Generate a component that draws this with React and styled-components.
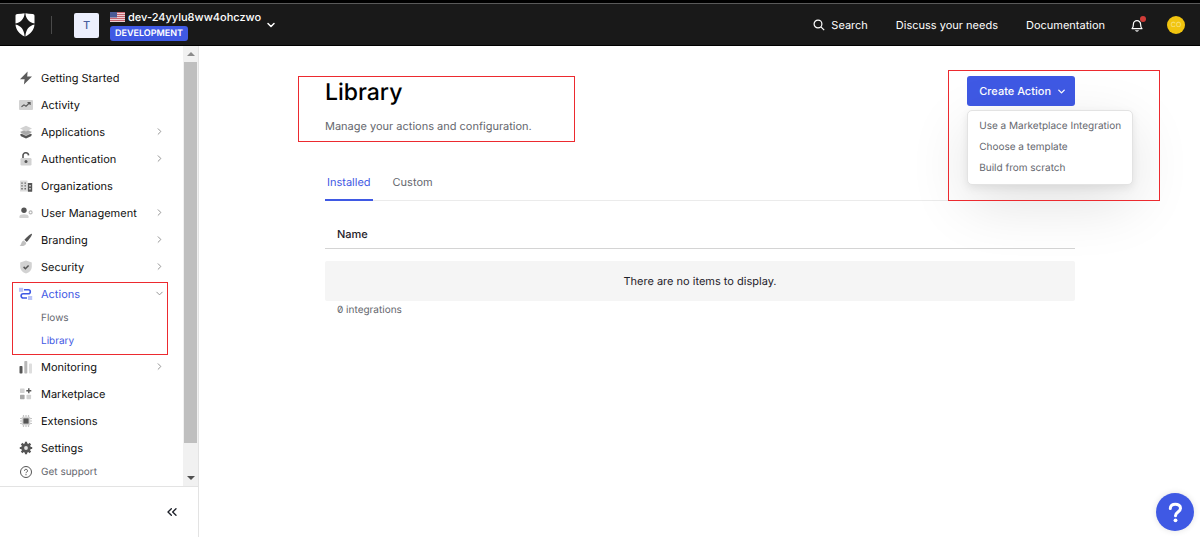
import React, { useState } from "react";
import styled, { createGlobalStyle } from "styled-components";
import { ChevronDown, ChevronRight, ChevronsLeft } from "lucide-react";

const GlobalStyle = createGlobalStyle`
  *,
  *::before,
  *::after {
    box-sizing: border-box;
  }

  body {
    margin: 0;
    background: #ffffff;
    color: #1e212a;
    font-family: Inter, "Liberation Sans", sans-serif;
    font-size: 11px;
    line-height: 16px;
    text-rendering: geometricPrecision;
  }

  button {
    margin: 0;
    padding: 0;
    border: 0;
    background: none;
    color: inherit;
    font: inherit;
    text-rendering: inherit;
    cursor: pointer;
  }

  a {
    color: inherit;
    text-decoration: none;
  }

  svg {
    display: block;
    flex: none;
  }
`;

const DARK = "#555555";
const LIGHT = "#d2d2d2";

// sidebar icons, all on a 14px grid
const icons = {
  bolt: <path d="M8.6 0.4 1 8.2h4.6L4.9 13.6 13 5.6H8.2Z" fill="#5c5c5c" />,
  activity: (
    <>
      <rect x="0" y="2" width="14" height="10" rx="1" fill={LIGHT} />
      <path d="M2.5 8.8 5 6.9l2 1.3 3.6-3.3M8.5 4.6h2.6v2.4" stroke={DARK} strokeWidth="1.1" fill="none" />
    </>
  ),
  layers: (
    <>
      <path d="M1 9.6 7 6.8l6 2.8-1 1.6-5 2.2-5-2.2Z" fill={DARK} />
      <path d="M1 6.8 7 4l6 2.8-1 1.4-5 2.4-5-2.4Z" fill="#a8a8a8" stroke="#fff" strokeWidth="0.5" />
      <path d="M1 3.6 7 0.8l6 2.8-6 3Z" fill={LIGHT} />
    </>
  ),
  lock: (
    <>
      <rect x="1.5" y="6" width="11" height="7.5" rx="1.2" fill={LIGHT} />
      <path d="M4 6V3.8a2.8 2.8 0 0 1 5.6-0.4" stroke={DARK} strokeWidth="1.6" fill="none" />
      <circle cx="7" cy="9.6" r="1.5" fill={DARK} />
    </>
  ),
  buildings: (
    <>
      <rect x="1" y="1.5" width="7.5" height="11" rx="0.6" fill="#dcdcdc" />
      <path d="M3 3.5v7.5M6.2 3.5v7.5" stroke={DARK} strokeWidth="1.3" strokeDasharray="1.3 1.5" />
      <rect x="8.8" y="4" width="4.4" height="8.8" rx="0.6" fill={DARK} />
      <path d="M11 6v1.4M11 9v1.4" stroke="#fff" strokeWidth="1.2" />
    </>
  ),
  users: (
    <>
      <circle cx="5" cy="4.2" r="2.7" fill={DARK} />
      <path d="M0.5 12V10.2c0-1.3 1.8-2 4.5-2s4.5 0.7 4.5 2V12Z" fill={LIGHT} />
      <circle cx="11.6" cy="6.4" r="1.5" stroke="#b4b4b4" strokeWidth="1.1" fill="none" />
    </>
  ),
  brush: (
    <>
      <path d="M12.9 0.8c0.9 0.8-3.7 7-5.1 8.2L5.3 6.8C6.7 5.2 12 0 12.9 0.8Z" fill={DARK} />
      <path d="M4.7 7.4 7.2 9.7c0.3 2.4-3.2 4-6.6 3.2 2-1 1.4-4.8 4.1-5.5Z" fill="#c0c0c0" />
    </>
  ),
  shield: (
    <>
      <path d="M7 0.6 12.8 2.6V7c0 3-2.3 5.2-5.8 6.6C3.5 12.2 1.2 10 1.2 7V2.6Z" fill={LIGHT} />
      <path d="m4.6 6.9 1.8 1.8 3.2-3.3" stroke={DARK} strokeWidth="1.5" fill="none" />
    </>
  ),
  flow: (
    <>
      <rect x="0" y="0.8" width="4.2" height="4" fill="#b9c3f7" />
      <rect x="9" y="9" width="4.2" height="4" fill="#b9c3f7" />
      <path
        d="M5 2.8h4.3a2 2 0 0 1 0 4H4.2a2.1 2.1 0 0 0 0 4.2H8"
        stroke="#3f59e4"
        strokeWidth="1.6"
        fill="none"
      />
    </>
  ),
  bars: (
    <>
      <rect x="0.5" y="6" width="3" height="7.5" rx="0.8" fill={DARK} />
      <rect x="5.3" y="1" width="3" height="12.5" rx="0.8" fill="#b8b8b8" />
      <rect x="10" y="3.5" width="3" height="10" rx="0.8" fill="#dedede" />
    </>
  ),
  market: (
    <>
      <rect x="1" y="1.5" width="4.6" height="4.4" rx="0.6" fill={LIGHT} />
      <rect x="1" y="7.8" width="4.6" height="4.4" rx="0.6" fill="#a8a8a8" />
      <rect x="7.5" y="7.8" width="4.6" height="4.4" rx="0.6" fill={LIGHT} />
      <path d="M9.8 1.2v5M7.3 3.7h5" stroke={DARK} strokeWidth="1.4" />
    </>
  ),
  chip: (
    <>
      <path
        d="M4.5 1v12M7 1v12M9.5 1v12M1 4.5h12M1 7h12M1 9.5h12"
        stroke="#c4c4c4"
        strokeWidth="1.2"
      />
      <rect x="2.7" y="2.7" width="8.6" height="8.6" rx="1" fill={LIGHT} />
      <rect x="4.4" y="4.4" width="5.2" height="5.2" fill={DARK} />
    </>
  ),
  gear: (
    <>
      <path
        d="M7 0.8v12.4M0.8 7h12.4M2.6 2.6l8.800 8.800M11.400 2.600l-8.800 8.800"
        stroke={DARK}
        strokeWidth="2.2"
      />
      <circle cx="7" cy="7" r="4.8" fill={DARK} />
      <circle cx="7" cy="7" r="1.9" fill="#e4e4e4" />
    </>
  ),
  help: (
    <>
      <circle cx="7" cy="7" r="5.5" fill="none" stroke={DARK} strokeWidth="1" />
      <path d="M5.5 5.8a1.5 1.5 0 1 1 2.2 1.3c-0.5 0.3-0.7 0.5-0.7 1.1" stroke={DARK} fill="none" />
      <circle cx="7" cy="9.7" r="0.6" fill={DARK} />
    </>
  ),
};

const Icon = ({ name }) => (
  <svg width="14" height="14" viewBox="0 0 14 14" aria-hidden="true">
    {icons[name]}
  </svg>
);

const Flag = () => (
  <svg width="15" height="10" viewBox="0 0 15 10" aria-hidden="true">
    <rect width="15" height="10" fill="#ecd0d4" />
    <path d="M0 0.5h15M0 2.5h15M0 4.5h15M0 6.5h15M0 8.5h15" stroke="#c4626c" strokeWidth="1" />
    <rect width="7" height="5.5" fill="#4a5a94" />
  </svg>
);

const Logo = () => (
  <svg width="20" height="24" viewBox="0 0 20 24" aria-hidden="true">
    <path
      d="M0.5 3C0.5 1.8 1.2 1.2 2.4 1.1 5 1 7.3 0.6 9.6 0.3 9.2 5.6 6 9.4 0.5 10.6Z
         M19.5 3C19.5 1.8 18.8 1.2 17.6 1.1 15 1 12.7 0.6 10.4 0.3 10.8 5.6 14 9.4 19.5 10.6Z
         M0.5 11.4C6 12.6 9.2 16.4 9.6 23.5 4.3 20.6 0.9 17 0.5 11.4Z
         M19.5 11.4C14 12.6 10.8 16.4 10.4 23.5 15.7 20.6 19.1 17 19.5 11.4Z"
      fill="#ffffff"
    />
  </svg>
);

const SearchIcon = () => (
  <svg width="12" height="12" viewBox="0 0 12 12" fill="none" stroke="#ffffff" strokeWidth="1.2" aria-hidden="true">
    <circle cx="5" cy="5" r="3.9" />
    <path d="m7.9 7.9 3.3 3.3" />
  </svg>
);

const BellIcon = () => (
  <svg width="12" height="13" viewBox="0 0 12 13" fill="none" stroke="#ffffff" strokeWidth="1.2" aria-hidden="true">
    <path d="M1 9.6c1-0.9 1.4-1.8 1.4-4.3a3.6 3.6 0 0 1 7.2 0c0 2.5 0.4 3.4 1.4 4.3Z" strokeLinejoin="round" />
    <path d="M4.6 11.2a1.6 1.6 0 0 0 2.8 0" />
  </svg>
);

const navItems = [
  { label: "Getting Started", icon: "bolt" },
  { label: "Activity", icon: "activity" },
  { label: "Applications", icon: "layers", more: true },
  { label: "Authentication", icon: "lock", more: true },
  { label: "Organizations", icon: "buildings" },
  { label: "User Management", icon: "users", more: true },
  { label: "Branding", icon: "brush", more: true },
  { label: "Security", icon: "shield", more: true },
  { label: "Actions", icon: "flow", children: ["Flows", "Library"] },
  { label: "Monitoring", icon: "bars", more: true },
  { label: "Marketplace", icon: "market" },
  { label: "Extensions", icon: "chip" },
  { label: "Settings", icon: "gear" },
];

const menuItems = ["Use a Marketplace Integration", "Choose a template", "Build from scratch"];

const App = () => {
  const [tab, setTab] = useState("Installed");
  const [menuOpen, setMenuOpen] = useState(true);

  return (
    <>
      <GlobalStyle />
      <Page>
        <Header>
          <LogoLink href="#" aria-label="Home">
            <Logo />
          </LogoLink>
          <Divider />
          <TenantBadge>T</TenantBadge>
          <Tenant>
            <TenantName>
              <Flag />
              dev-24yylu8ww4ohczwo
            </TenantName>
            <EnvTag>DEVELOPMENT</EnvTag>
          </Tenant>
          <TenantToggle aria-label="Switch tenant">
            <ChevronDown size={12} strokeWidth={3} />
          </TenantToggle>
          <HeaderNav>
            <SearchButton>
              <SearchIcon />
              Search
            </SearchButton>
            <a href="#">Discuss your needs</a>
            <a href="#">Documentation</a>
          </HeaderNav>
          <BellButton aria-label="Notifications">
            <BellIcon />
            <Dot />
          </BellButton>
          <Avatar aria-label="Account">CO</Avatar>
        </Header>

        <Body>
          <Sidebar>
            <SidebarScroll>
              <Nav>
                {navItems.map((item) =>
                  item.children ? (
                    <NavGroup key={item.label}>
                      <NavLink href="#" $active>
                        <Icon name={item.icon} />
                        <NavLabel>{item.label}</NavLabel>
                        <ChevronDown size={11} color="#8c8c8c" />
                      </NavLink>
                      {item.children.map((child) => (
                        <SubLink key={child} href="#" $active={child === "Library"}>
                          {child}
                        </SubLink>
                      ))}
                    </NavGroup>
                  ) : (
                    <NavLink key={item.label} href="#">
                      <Icon name={item.icon} />
                      <NavLabel>{item.label}</NavLabel>
                      {item.more && <ChevronRight size={11} color="#8c8c8c" />}
                    </NavLink>
                  )
                )}
                <SupportLink href="#">
                  <Icon name="help" />
                  Get support
                </SupportLink>
              </Nav>
              <Scrollbar aria-hidden="true">
                <Arrow $up />
                <Thumb />
                <Arrow />
              </Scrollbar>
            </SidebarScroll>
            <Collapse>
              <button aria-label="Collapse sidebar">
                <ChevronsLeft size={16} />
              </button>
            </Collapse>
          </Sidebar>

          <Main>
            <PageHead>
              <Heading>
                <Title>Library</Title>
                <Subtitle>Manage your actions and configuration.</Subtitle>
              </Heading>
              <CreateWrap>
                <CreateButton aria-expanded={menuOpen} onClick={() => setMenuOpen(!menuOpen)}>
                  Create Action
                  <ChevronDown size={11} strokeWidth={3} />
                </CreateButton>
                {menuOpen && (
                  <Menu>
                    {menuItems.map((item) => (
                      <MenuItem key={item}>{item}</MenuItem>
                    ))}
                  </Menu>
                )}
              </CreateWrap>
            </PageHead>

            <Tabs role="tablist">
              {["Installed", "Custom"].map((name) => (
                <Tab
                  key={name}
                  role="tab"
                  aria-selected={tab === name}
                  $active={tab === name}
                  onClick={() => setTab(name)}
                >
                  {name}
                </Tab>
              ))}
            </Tabs>

            <Table>
              <thead>
                <tr>
                  <th>Name</th>
                </tr>
              </thead>
              <tbody>
                <tr>
                  <td>
                    <Empty>There are no items to display.</Empty>
                  </td>
                </tr>
              </tbody>
            </Table>
            <Count>0 integrations</Count>
          </Main>
        </Body>
        <HelpButton aria-label="Help">
          <svg width="17" height="21" viewBox="0 0 18 22" fill="none" aria-hidden="true">
            <path
              d="M3.5 6.7C3.5 3.8 5.8 2.2 8.8 2.2c3.1 0 5.5 1.7 5.5 4.4 0 3.9-5.3 3.9-5.3 7.8"
              stroke="#ffffff"
              strokeWidth="3.2"
              strokeLinecap="round"
            />
            <circle cx="9" cy="19.3" r="2" fill="#ffffff" />
          </svg>
        </HelpButton>
      </Page>
    </>
  );
};

export default App;

const Page = styled.div`
  display: flex;
  flex-direction: column;
  min-height: 100vh;
`;

const Header = styled.header`
  display: flex;
  align-items: center;
  height: 46px;
  padding: 2px 15px 0;
  border-top: 3px solid #000000;
  border-bottom: 1px solid #000000;
  background: #191919;
  box-shadow: inset 0 1px 0 #5a5a5a;
  color: #ffffff;
`;

const LogoLink = styled.a`
  display: flex;
`;

const Divider = styled.span`
  width: 1px;
  height: 18px;
  margin: 0 22px 0 16px;
  background: #4a4a4a;
`;

const TenantBadge = styled.span`
  display: flex;
  align-items: center;
  justify-content: center;
  width: 25px;
  height: 25px;
  margin-right: 11px;
  border-radius: 2px;
  background: #eceffd;
  color: #4a5f9e;
  font-weight: 500;
`;

const Tenant = styled.div`
  display: flex;
  flex-direction: column;
  align-items: flex-start;
  gap: 2px;
`;

const TenantName = styled.span`
  display: flex;
  align-items: center;
  gap: 3px;
  font-weight: 500;
  line-height: 14px;
`;

const EnvTag = styled.span`
  padding: 0 5px;
  border-radius: 3px;
  background: #3f59e4;
  font-size: 9px;
  font-weight: 600;
  line-height: 15px;
`;

const TenantToggle = styled.button`
  margin: 0 auto 0 4px;
`;

const HeaderNav = styled.nav`
  display: flex;
  align-items: center;
  gap: 28px;
`;

const SearchButton = styled.button`
  display: flex;
  align-items: center;
  gap: 6px;
`;

const BellButton = styled.button`
  position: relative;
  margin: 0 24px 0 26px;
`;

const Dot = styled.span`
  position: absolute;
  top: -3px;
  right: -3px;
  width: 6px;
  height: 6px;
  border-radius: 50%;
  background: #d03c38;
`;

const Avatar = styled.button`
  width: 18px;
  height: 18px;
  border-radius: 50%;
  background: #f1c40f;
  color: #f9e58c;
  font-size: 7px;
  line-height: 18px;
`;

const Body = styled.div`
  display: flex;
  flex: 1;
`;

const Sidebar = styled.aside`
  display: flex;
  flex-direction: column;
  flex: none;
  width: 199px;
  border-right: 1px solid #e3e3e3;
`;

const SidebarScroll = styled.div`
  display: flex;
  flex: 1;
`;

const Nav = styled.nav`
  flex: 1;
  padding: 18px 18px 0 19px;
`;

const NavLink = styled.a`
  display: flex;
  align-items: center;
  gap: 8px;
  height: 27px;
  color: ${(props) => (props.$active ? "#3f59e4" : "#111111")};
`;

const NavLabel = styled.span`
  flex: 1;
`;

// outlined section, the frame hangs a little outside of the rows
const NavGroup = styled.div`
  position: relative;

  &::after {
    content: "";
    position: absolute;
    inset: 2px -3px -2px -7px;
    border: 1px solid #ec2a2f;
    pointer-events: none;
  }
`;

const SubLink = styled.a`
  display: block;
  padding-left: 22px;
  color: ${(props) => (props.$active ? "#3f59e4" : "#65676e")};
  font-size: 10px;
  line-height: 23px;
`;

const SupportLink = styled.a`
  display: flex;
  align-items: center;
  gap: 8px;
  height: 22px;
  color: #65676e;
  font-size: 10px;
`;

const Scrollbar = styled.div`
  display: flex;
  flex-direction: column;
  align-items: center;
  width: 15px;
  background: #f1f1f1;
`;

const Arrow = styled.span`
  display: flex;
  align-items: center;
  justify-content: center;
  height: 16px;

  &::before {
    content: "";
    border: 4px solid transparent;
    border-top-width: ${(props) => (props.$up ? "0" : "4px")};
    border-bottom-width: ${(props) => (props.$up ? "4px" : "0")};
    border-top-color: #505050;
    border-bottom-color: #8b8b8b;
  }
`;

const Thumb = styled.span`
  flex: 1;
  width: 13px;
  margin-bottom: 27px;
  background: #bfbfbf;
`;

const Collapse = styled.div`
  display: flex;
  align-items: center;
  justify-content: flex-end;
  height: 51px;
  padding-right: 18px;
  border-top: 1px solid #e3e3e3;
`;

const Main = styled.main`
  flex: 1;
  padding: 30px 125px 0 126px;
`;

const PageHead = styled.div`
  display: flex;
  align-items: flex-start;
  justify-content: space-between;
`;

const Heading = styled.div`
  position: relative;

  &::after {
    content: "";
    position: absolute;
    top: 0;
    left: -27px;
    width: 277px;
    height: 66px;
    border: 1px solid #ec2a2f;
    pointer-events: none;
  }
`;

const Title = styled.h1`
  margin: 0 0 10px;
  color: #000000;
  font-size: 23px;
  font-weight: 500;
  line-height: 32px;
`;

const Subtitle = styled.p`
  margin: 0;
  color: #65676e;
`;

const CreateWrap = styled.div`
  position: relative;

  &::after {
    content: "";
    position: absolute;
    top: -6px;
    left: -19px;
    width: 212px;
    height: 131px;
    border: 1px solid #ec2a2f;
    pointer-events: none;
    z-index: 3;
  }
`;

const CreateButton = styled.button`
  display: flex;
  align-items: center;
  gap: 5px;
  height: 30px;
  padding: 0 8px 0 12px;
  border-radius: 3px;
  background: #3f59e4;
  color: #ffffff;
  font-weight: 500;
`;

const Menu = styled.div`
  position: absolute;
  top: 34px;
  left: 0;
  z-index: 2;
  padding: 5px 0;
  border: 1px solid #e3e3e3;
  border-radius: 5px;
  background: #ffffff;
  box-shadow:
    0 3px 8px rgba(0, 0, 0, 0.08),
    0 18px 60px rgba(0, 0, 0, 0.12);
`;

const MenuItem = styled.button`
  display: block;
  width: 100%;
  padding: 0 11px;
  color: #65676e;
  font-size: 10px;
  line-height: 21px;
  text-align: left;
  white-space: nowrap;
`;

const Tabs = styled.div`
  display: flex;
  gap: 18px;
  margin-top: 31px;
  border-bottom: 1px solid #ebebeb;
`;

const Tab = styled.button`
  height: 36px;
  margin-bottom: -1px;
  padding: 0 2px;
  border-bottom: 2px solid ${(props) => (props.$active ? "#3f59e4" : "transparent")};
  color: ${(props) => (props.$active ? "#3f59e4" : "#65676e")};
`;

const Table = styled.table`
  width: 100%;
  margin-top: 18px;
  border-spacing: 0;

  th {
    height: 30px;
    padding: 0 12px;
    border-bottom: 1px solid #d4d4d4;
    font-weight: 500;
    text-align: left;
  }

  td {
    padding: 12px 0 0;
  }
`;

const Empty = styled.div`
  border-radius: 2px;
  background: #f5f5f5;
  line-height: 40px;
  text-align: center;
`;

const Count = styled.p`
  margin: 1px 12px 0;
  color: #65676e;
  font-size: 10px;
  font-variant-numeric: slashed-zero;
`;

const HelpButton = styled.button`
  position: fixed;
  right: 6px;
  bottom: 6px;
  display: flex;
  align-items: center;
  justify-content: center;
  width: 38px;
  height: 38px;
  border-radius: 50%;
  background: #3f59e4;
  box-shadow: 0 0 6px rgba(0, 0, 0, 0.12);
`;
